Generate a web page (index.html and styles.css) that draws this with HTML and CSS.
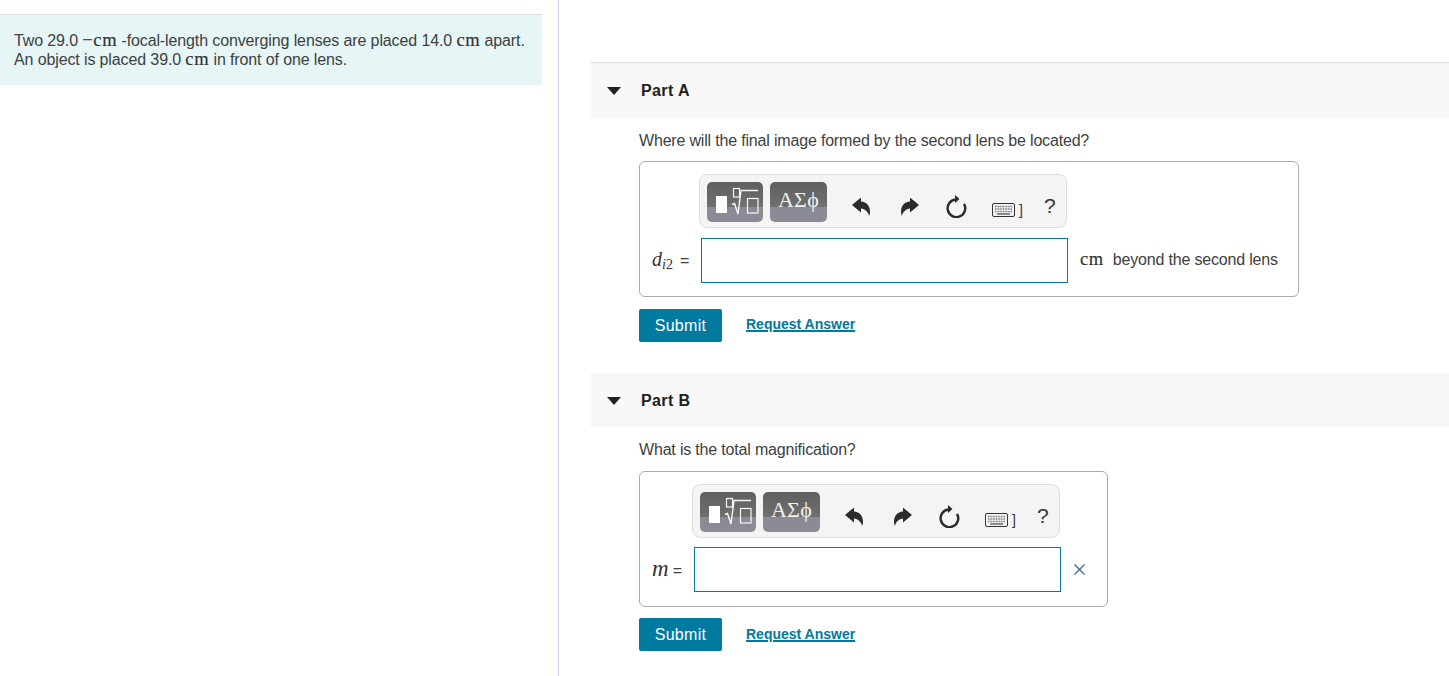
FILE: index.html
```html
<!DOCTYPE html>
<html lang="en">
<head>
<meta charset="utf-8">
<title>Converging lenses</title>
<link rel="stylesheet" href="styles.css">
</head>
<body>
<svg class="defs" width="0" height="0" aria-hidden="true">
  <symbol id="i-template" viewBox="0 0 56 40">
    <rect x="9" y="14" width="11" height="17" fill="#fff"/>
    <rect x="26.500" y="6.500" width="6" height="8.500" fill="none" stroke="#f8f8f8" stroke-width="1.200"/>
    <path d="M25 22.500l2.500-1 3.500 10.500L34 8.500H51" fill="none" stroke="#f8f8f8" stroke-width="1.400"/>
    <rect x="40.500" y="16.500" width="10.500" height="14.500" fill="none" stroke="#f8f8f8" stroke-width="1.200"/>
  </symbol>
  <symbol id="i-undo" viewBox="0 0 18 18">
    <path d="M0 7L9 -0.500V3.500C14.500 4 18 7.500 18 14C18 15.500 17.500 17 17 18C16.500 14 13 11 9 10.500V14.500Z" fill="#2b2b2b"/>
  </symbol>
  <symbol id="i-redo" viewBox="0 0 18 18">
    <path d="M18 7L9 -0.500V3.500C3.500 4 0 7.500 0 14C0 15.500 0.500 17 1 18C1.500 14 5 11 9 10.500V14.500Z" fill="#2b2b2b"/>
  </symbol>
  <symbol id="i-reset" viewBox="0 0 21 23">
    <path d="M9.500 4.500A8.800 8.800 0 1 0 18 8.800" fill="none" stroke="#2b2b2b" stroke-width="2.400"/>
    <path d="M9 0L13.500 4 9 8Z" fill="#2b2b2b"/>
  </symbol>
  <symbol id="i-kbd" viewBox="0 0 23 14">
    <rect x="0.500" y="0.500" width="22" height="13" rx="1.500" fill="#f4f4f4" stroke="#333"/>
    <path d="M3 3.500H20M3 6H20M3 8.500H20" stroke="#777" stroke-width="1.500" stroke-dasharray="1 .6"/>
    <path d="M5 11H18" stroke="#666" stroke-width="1.500"/>
  </symbol>
</svg>

<div class="page">
  <aside class="left">
    <div class="intro">
      Two 29.0 <span class="math">−cm</span> -focal-length converging lenses are placed 14.0 <span class="math">cm</span> apart.<br>
      An object is placed 39.0 <span class="math">cm</span> in front of one lens.
    </div>
  </aside>

  <main class="right">
    <section class="part part-a">
      <header class="part-head"><span class="caret"></span><h2>Part A</h2></header>
      <div class="part-body">
        <p class="question">Where will the final image formed by the second lens be located?</p>
        <div class="answer answer-wide">
          <div class="answer-tools">
            <div class="toolbar">
              <span class="tbtn tbtn-t"><svg width="56" height="40"><use href="#i-template"/></svg></span>
              <span class="tbtn tbtn-g">ΑΣϕ</span>
              <svg class="ic ic-undo" width="18" height="18"><use href="#i-undo"/></svg>
              <svg class="ic ic-redo" width="18" height="18"><use href="#i-redo"/></svg>
              <svg class="ic ic-reset" width="21" height="23"><use href="#i-reset"/></svg>
              <svg class="ic ic-kbd" width="23" height="14"><use href="#i-kbd"/></svg>
              <span class="brk">]</span>
              <span class="help">?</span>
            </div>
          </div>
          <div class="answer-row">
            <span class="label"><i class="var">d</i><sub class="var"><i>i</i>2</sub><span class="eq">=</span></span>
            <input class="field" type="text" aria-label="d i 2">
            <span class="unit"><span class="math">cm</span><span class="unit-text">beyond the second lens</span></span>
          </div>
        </div>
        <div class="actions">
          <button class="submit" type="button">Submit</button>
          <a class="req" href="#">Request Answer</a>
        </div>
      </div>
    </section>

    <section class="part part-b">
      <header class="part-head"><span class="caret"></span><h2>Part B</h2></header>
      <div class="part-body">
        <p class="question">What is the total magnification?</p>
        <div class="answer answer-narrow">
          <div class="answer-tools">
            <div class="toolbar">
              <span class="tbtn tbtn-t"><svg width="56" height="40"><use href="#i-template"/></svg></span>
              <span class="tbtn tbtn-g">ΑΣϕ</span>
              <svg class="ic ic-undo" width="18" height="18"><use href="#i-undo"/></svg>
              <svg class="ic ic-redo" width="18" height="18"><use href="#i-redo"/></svg>
              <svg class="ic ic-reset" width="21" height="23"><use href="#i-reset"/></svg>
              <svg class="ic ic-kbd" width="23" height="14"><use href="#i-kbd"/></svg>
              <span class="brk">]</span>
              <span class="help">?</span>
            </div>
          </div>
          <div class="answer-row">
            <span class="label"><i class="var var-m">m</i><span class="eq eq-m">=</span></span>
            <input class="field" type="text" aria-label="m">
            <svg class="clear" width="11" height="11" viewBox="0 0 11 11" aria-hidden="true"><path d="M0.500 0.500L10.500 10.500M10.500 0.500L0.500 10.500" stroke="#33697f" stroke-width="1.200"/></svg>
          </div>
        </div>
        <div class="actions">
          <button class="submit" type="button">Submit</button>
          <a class="req" href="#">Request Answer</a>
        </div>
      </div>
    </section>
  </main>
</div>
</body>
</html>
```

FILE: styles.css
```css
* { box-sizing: border-box; }
html, body { margin: 0; height: 100%; }
body {
  font-family: "Liberation Sans", Arial, sans-serif;
  font-size: 16px;
  color: #404040;
  background: #fff;
  overflow: hidden;
}
.defs { display: block; height: 0; }
.page {
  display: grid;
  grid-template-columns: 559px 1fr;
  height: 676px;
}
.left {
  border-right: 1px solid #c6d6e6;
  padding: 14px 16px 0 0;
}
.intro {
  height: 71px;
  background: #e6f6f6;
  border-top: 1px solid #dcdfe0;
  padding: 16px 0 0 14px;
  line-height: 19px;
  letter-spacing: -0.12px;
}
.math {
  font-family: "Liberation Serif", "Times New Roman", serif;
  font-size: 18.500px;
  letter-spacing: 0.6px;
  color: #333;
  -webkit-text-stroke: 0.2px #333;
}
.var {
  font-family: "Liberation Serif", "Times New Roman", serif;
  color: #333;
}
.right { padding: 62px 0 0 31px; }
.part-b { margin-top: 31px; }
.part-head {
  display: flex;
  align-items: center;
  background: #f8f8f8;
}
.part-a .part-head { height: 56px; border-top: 1px solid #e0e0e0; }
.part-b .part-head { height: 54px; padding-top: 1px; }
.caret {
  width: 0;
  height: 0;
  margin-left: 17px;
  border-left: 7px solid transparent;
  border-right: 7px solid transparent;
  border-top: 8px solid #212121;
}
.part-head h2 {
  margin: 0 0 0 20px;
  font-size: 16px;
  font-weight: 700;
  letter-spacing: 0.4px;
  color: #212121;
}
.part-body { padding-left: 49px; }
.question {
  margin: 0;
  padding-top: 13px;
  line-height: 20px;
  letter-spacing: -0.18px;
}
.answer {
  height: 136px;
  border: 1px solid #aaa;
  border-radius: 6px;
  padding: 12px 0 0;
}
.answer-wide { width: 660px; margin-top: 10px; }
.answer-narrow { width: 469px; margin-top: 11px; }
.answer-wide .answer-tools { padding-left: 59px; }
.answer-narrow .answer-tools { padding-left: 52px; }
.toolbar {
  display: flex;
  align-items: flex-start;
  width: 368px;
  height: 54px;
  padding: 7px 0 0 7px;
  background: #f4f4f4;
  border: 1px solid #dedede;
  border-radius: 8px;
}
.tbtn {
  display: flex;
  align-items: center;
  justify-content: center;
  height: 40px;
  border-radius: 5px;
  background: linear-gradient(#5f5f5f 0, #707070 63%, #8b8b96 63%, #8b8b96 100%);
}
.tbtn-t { width: 56px; }
.tbtn-g {
  width: 57px;
  margin-left: 7px;
  padding-bottom: 4px;
  font-family: "Liberation Serif", "Times New Roman", serif;
  font-size: 22px;
  letter-spacing: 0.3px;
  color: #f0f0f0;
}
.ic { flex: none; display: block; overflow: visible; }
.ic-undo { margin: 16px 0 0 25px; }
.ic-redo { margin: 16px 0 0 31px; }
.ic-reset { margin: 13px 0 0 27px; }
.ic-kbd { margin: 21px 0 0 25px; }
.brk { margin: 20px 0 0 4px; font-size: 14px; line-height: 16px; color: #333; }
.help { margin: 12px 0 0 21px; font-size: 21px; line-height: 24px; color: #333; }
.answer-row {
  display: flex;
  align-items: center;
  height: 45px;
}
.answer-wide .answer-row { margin-top: 10px; }
.answer-narrow .answer-row { margin-top: 9px; }
.label {
  display: flex;
  align-items: baseline;
  padding: 0 0 2px 12px;
  white-space: nowrap;
  font-size: 20px;
}
.label sub { font-size: 14px; line-height: 0; transform: translateY(3px); }
.label .eq { margin-left: 7px; font-family: "Liberation Sans", Arial, sans-serif; font-size: 16px; }
.label .eq-m { margin-left: 4px; }
.var-m { font-size: 23px; }
.answer-wide .label { width: 61px; }
.answer-narrow .label { width: 54px; }
.field {
  width: 367px;
  height: 45px;
  margin: 0;
  padding: 0 6px;
  border: 1px solid #007a9e;
  border-radius: 0;
  background: #fff;
  outline: none;
}
.unit {
  margin-left: 12px;
  padding-bottom: 2px;
  white-space: nowrap;
  letter-spacing: -0.18px;
}
.unit-text { margin-left: 9px; }
.clear { margin-left: 13px; flex: none; }
.actions {
  display: flex;
  align-items: center;
}
.part-a .actions { margin-top: 12px; }
.part-b .actions { margin-top: 11px; }
.submit {
  width: 83px;
  height: 33px;
  padding: 0;
  border: 0;
  border-radius: 2px;
  background: #007a9e;
  color: #fff;
  font: 16px "Liberation Sans", Arial, sans-serif;
  letter-spacing: 0.3px;
}
.req {
  margin: 0 0 4px 24px;
  font-size: 14px;
  font-weight: 700;
  color: #007a9e;
  text-decoration-thickness: 1.500px;
}
.part-b .req { margin-bottom: 2px; }
```
